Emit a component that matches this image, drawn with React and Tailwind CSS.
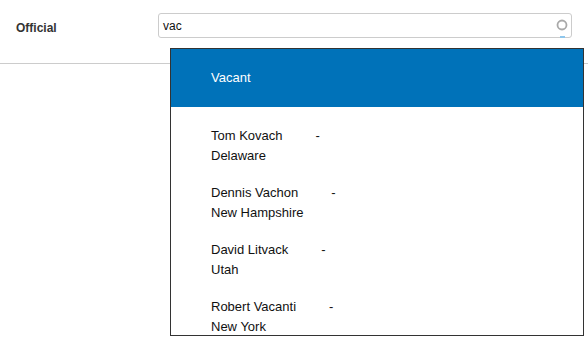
import React from "react";

const items = [
  { name: "Tom Kovach", state: "Delaware" },
  { name: "Dennis Vachon", state: "New Hampshire" },
  { name: "David Litvack", state: "Utah" },
  { name: "Robert Vacanti", state: "New York" },
];

export default function App() {
  return (
    <div
      className="relative w-[588px] h-[347px] bg-white overflow-hidden"
      style={{ fontFamily: '"Liberation Sans", Arial, sans-serif' }}
    >
      <div className="flex items-start h-[64px] border-b border-[#cccccc]">
        <div className="w-[158px] pl-4 pt-[19px] text-[12px] font-bold text-[#333333]">Official</div>
        <div className="relative mt-[13px] w-[414px] h-[25px] border border-[#cccccc] rounded-[3px] flex items-center pl-[4px]">
          <span className="text-[12px] text-[#111111]">vac</span>
          <svg className="absolute right-[3px] top-[5px]" width="12" height="12" viewBox="0 0 12 12">
            <circle cx="6" cy="6" r="4.5" fill="none" stroke="#a9a9a9" strokeWidth="1.8" />
          </svg>
          <div className="absolute right-[6px] bottom-[-1px] w-[5px] h-[2px] bg-[#8ec6ec]" />
        </div>
      </div>
      <div className="absolute left-[170px] top-[48px] w-[414px] h-[288px] border border-[#333333] bg-white">
        <div className="h-[58px] bg-[#0072b9] flex items-center pl-[40px] text-[13px] text-white">Vacant</div>
        <div className="pt-[19px] pl-[40px] flex flex-col gap-[17px] text-[13px] text-[#111111] leading-[20px]">
          {items.map((it) => (
            <div key={it.name}>
              <div className="flex">
                <span>{it.name}</span>
                <span className="ml-[33px]">-</span>
              </div>
              <div>{it.state}</div>
            </div>
          ))}
        </div>
      </div>
    </div>
  );
}
